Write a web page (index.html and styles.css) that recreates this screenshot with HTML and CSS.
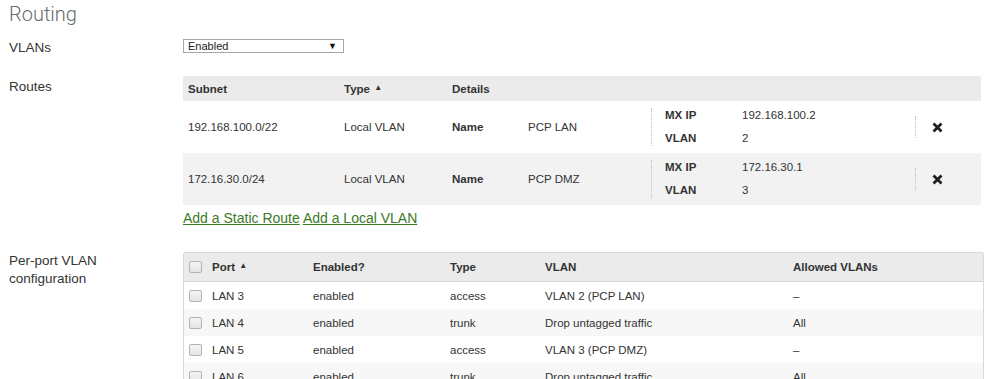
FILE: index.html
```html
<!DOCTYPE html>
<html>
<head>
<meta charset="utf-8">
<link rel="stylesheet" href="styles.css">
</head>
<body>
<div class="page">
  <h1 class="title">Routing</h1>

  <div class="field vlans">
    <div class="label">VLANs</div>
    <div class="select"><span>Enabled</span><span class="caret">&#9660;</span></div>
  </div>

  <div class="field routes">
    <div class="label label-routes">Routes</div>
    <div class="content">
      <div class="rtable">
        <div class="rhead">
          <div class="c-subnet">Subnet</div>
          <div class="c-type">Type <span class="sort">&#9650;</span></div>
          <div>Details</div>
        </div>
        <div class="rrow">
          <div class="c-subnet">192.168.100.0/22</div>
          <div class="c-type">Local VLAN</div>
          <div class="c-key">Name</div>
          <div class="c-name">PCP LAN</div>
          <div class="sep"></div>
          <div class="kv">
            <div class="kv-line"><span class="c-key2">MX IP</span><span class="c-val2">192.168.100.2</span></div>
            <div class="kv-line"><span class="c-key2">VLAN</span><span class="c-val2">2</span></div>
          </div>
          <div class="sep sep-small"></div>
          <div class="del"><svg width="11" height="11" viewBox="0 0 11 11"><path d="M1.5 1.5 L9.5 9.5 M9.5 1.5 L1.5 9.5" stroke="#1f1f1f" stroke-width="2.8" stroke-linecap="butt"/></svg></div>
        </div>
        <div class="rrow alt">
          <div class="c-subnet">172.16.30.0/24</div>
          <div class="c-type">Local VLAN</div>
          <div class="c-key">Name</div>
          <div class="c-name">PCP DMZ</div>
          <div class="sep"></div>
          <div class="kv">
            <div class="kv-line"><span class="c-key2">MX IP</span><span class="c-val2">172.16.30.1</span></div>
            <div class="kv-line"><span class="c-key2">VLAN</span><span class="c-val2">3</span></div>
          </div>
          <div class="sep sep-small"></div>
          <div class="del"><svg width="11" height="11" viewBox="0 0 11 11"><path d="M1.5 1.5 L9.5 9.5 M9.5 1.5 L1.5 9.5" stroke="#1f1f1f" stroke-width="2.8" stroke-linecap="butt"/></svg></div>
        </div>
      </div>
      <div class="links"><a href="#">Add a Static Route</a> <a href="#">Add a Local VLAN</a></div>
    </div>
  </div>

  <div class="field ports">
    <div class="label">Per-port VLAN<br>configuration</div>
    <div class="ptable">
      <div class="prow phead">
        <div class="p-cb"><span class="cb"></span></div>
        <div class="p-port">Port <span class="sort">&#9650;</span></div>
        <div class="p-en">Enabled?</div>
        <div class="p-type">Type</div>
        <div class="p-vlan">VLAN</div>
        <div class="p-allowed">Allowed VLANs</div>
      </div>
      <div class="prow">
        <div class="p-cb"><span class="cb"></span></div>
        <div class="p-port">LAN 3</div>
        <div class="p-en">enabled</div>
        <div class="p-type">access</div>
        <div class="p-vlan">VLAN 2 (PCP LAN)</div>
        <div class="p-allowed">&ndash;</div>
      </div>
      <div class="prow alt">
        <div class="p-cb"><span class="cb"></span></div>
        <div class="p-port">LAN 4</div>
        <div class="p-en">enabled</div>
        <div class="p-type">trunk</div>
        <div class="p-vlan">Drop untagged traffic</div>
        <div class="p-allowed">All</div>
      </div>
      <div class="prow">
        <div class="p-cb"><span class="cb"></span></div>
        <div class="p-port">LAN 5</div>
        <div class="p-en">enabled</div>
        <div class="p-type">access</div>
        <div class="p-vlan">VLAN 3 (PCP DMZ)</div>
        <div class="p-allowed">&ndash;</div>
      </div>
      <div class="prow alt">
        <div class="p-cb"><span class="cb"></span></div>
        <div class="p-port">LAN 6</div>
        <div class="p-en">enabled</div>
        <div class="p-type">trunk</div>
        <div class="p-vlan">Drop untagged traffic</div>
        <div class="p-allowed">All</div>
      </div>
    </div>
  </div>
</div>
</body>
</html>
```
FILE: styles.css
```css
html, body {
  margin: 0;
  padding: 0;
  background: #ffffff;
}

.page {
  padding: 0 9px;
  font-family: "Liberation Sans", Arial, sans-serif;
  color: #333333;
}

.title {
  margin: 0;
  padding-top: 2px;
  height: 24px;
  line-height: 24px;
  font-family: Roboto, "Liberation Sans", sans-serif;
  font-size: 20px;
  font-weight: 300;
  color: #6b6b6b;
}

.field {
  display: grid;
  grid-template-columns: 174px 800px;
}

.label {
  font-size: 13.5px;
  line-height: 18px;
  color: #333333;
}

.label-routes {
  padding-top: 2px;
}

.vlans {
  margin-top: 13px;
  height: 14px;
}

.select {
  box-sizing: border-box;
  width: 161px;
  height: 14px;
  border: 1px solid #a6a6a6;
  display: flex;
  justify-content: space-between;
  align-items: center;
  padding: 0 6px 0 4px;
  font-size: 11px;
  color: #222222;
}

.caret {
  font-size: 9px;
  color: #111111;
}

.routes {
  margin-top: 23px;
}

.rtable {
  width: 798px;
  font-size: 11.5px;
  color: #333333;
}

.rhead {
  display: flex;
  align-items: center;
  height: 25px;
  background: #ebebeb;
  padding-left: 5px;
  font-weight: bold;
  color: #333333;
}

.sort {
  font-size: 8px;
  vertical-align: 3px;
  margin-left: 1px;
}

.c-subnet {
  width: 156px;
}

.c-type {
  width: 108px;
}

.rrow {
  display: flex;
  align-items: center;
  height: 52px;
  padding-left: 5px;
}

.rrow.alt {
  background: #f2f2f3;
}

.c-key {
  width: 76px;
  font-weight: bold;
}

.c-name {
  width: 123px;
}

.sep {
  width: 0;
  height: 38px;
  border-left: 1px dotted #bdbdbd;
}

.sep-small {
  height: 22px;
}

.kv {
  width: 250px;
  padding-left: 13px;
  align-self: flex-start;
  padding-top: 2px;
}

.kv-line {
  display: flex;
  height: 23px;
  align-items: center;
}

.c-key2 {
  width: 77px;
  font-weight: bold;
}

.del {
  margin-left: 16px;
  display: flex;
  align-items: center;
}

.links {
  margin-top: 4px;
  font-size: 14px;
  line-height: 18px;
}

.links a {
  color: #3b7a26;
  text-decoration: underline;
}

.ports {
  margin-top: 25px;
}

.ptable {
  width: 799px;
  border: 1px solid #d9d9d9;
  border-bottom: none;
  border-radius: 3px 3px 0 0;
  font-size: 11.5px;
  color: #333333;
  overflow: hidden;
}

.prow {
  display: flex;
  align-items: center;
  height: 27px;
}

.prow.alt {
  background: #f7f7f7;
}

.phead {
  height: 28px;
  background: #ebebeb;
  border-bottom: 1px solid #d6d6d6;
  font-weight: bold;
}

.p-cb {
  box-sizing: border-box;
  width: 28px;
  padding-left: 5px;
  display: flex;
  align-items: center;
}

.cb {
  box-sizing: border-box;
  width: 13px;
  height: 12px;
  border: 1px solid #b3b3b3;
  border-radius: 2px;
  background: linear-gradient(#f4f4f4, #e4e4e4);
}

.p-port {
  width: 101px;
}

.p-en {
  width: 137px;
}

.p-type {
  width: 95px;
}

.p-vlan {
  width: 248px;
}

.p-allowed {
  flex: 1;
}
```
